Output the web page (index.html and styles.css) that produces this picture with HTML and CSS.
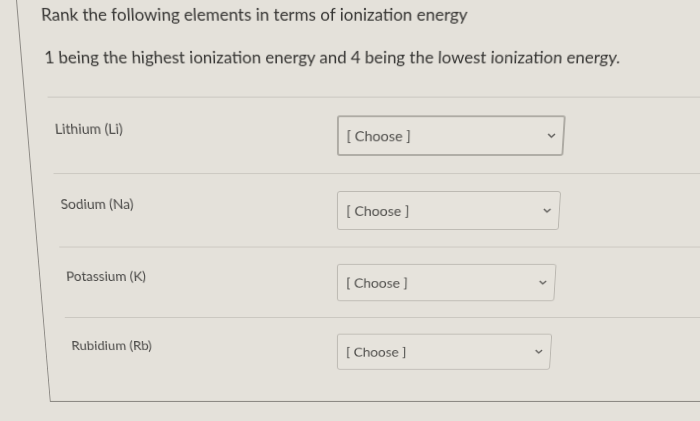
FILE: index.html
```html
<!DOCTYPE html>
<html lang="en">
<head>
    <meta charset="UTF-8">
    <meta name="viewport" content="width=device-width, initial-scale=1.0">
    <title>Question</title>
    <link rel="stylesheet" href="styles.css">
</head>
<body>

    <div class="frame">
        <div class="page">
            <div class="quiz">
                <p class="title">Rank the following elements in terms of ionization energy</p>
                <p class="title second">1 being the highest ionization energy and 4 being the lowest ionization energy.</p>

                <div class="rows">
                    <div class="row">
                        <div class="label">Lithium (Li)</div>
                        <div class="pick first">
                            <select><option>[ Choose ]</option></select>
                            <svg class="arrow" width="9" height="6" viewBox="0 0 9 6"><path d="M1 1 L4.5 4.5 L8 1"/></svg>
                        </div>
                    </div>
                    <div class="row">
                        <div class="label">Sodium (Na)</div>
                        <div class="pick">
                            <select><option>[ Choose ]</option></select>
                            <svg class="arrow" width="9" height="6" viewBox="0 0 9 6"><path d="M1 1 L4.5 4.5 L8 1"/></svg>
                        </div>
                    </div>
                    <div class="row">
                        <div class="label">Potassium (K)</div>
                        <div class="pick">
                            <select><option>[ Choose ]</option></select>
                            <svg class="arrow" width="9" height="6" viewBox="0 0 9 6"><path d="M1 1 L4.5 4.5 L8 1"/></svg>
                        </div>
                    </div>
                    <div class="row">
                        <div class="label">Rubidium (Rb)</div>
                        <div class="pick">
                            <select><option>[ Choose ]</option></select>
                            <svg class="arrow" width="9" height="6" viewBox="0 0 9 6"><path d="M1 1 L4.5 4.5 L8 1"/></svg>
                        </div>
                    </div>
                </div>
            </div>
        </div>
    </div>

</body>
</html>
```

FILE: styles.css
```css
html,body{
    margin: 0;
    padding: 0;
    overflow: hidden;
}
body{
    background: #e4e1da;
    font-family: "Lato", "Open Sans", sans-serif;
}
.frame{
    width: 700px;
    height: 421px;
    overflow: hidden;
}
/* the photo was taken at an angle, so the whole sheet leans back a bit */
.page{
    width: 745px;
    transform-origin: 336px 0;
    transform: perspective(500px) rotateX(-7.5deg);
}
.quiz{
    margin-left: 16px;
    border-left: 1px solid #8d8a85;
    border-bottom: 1px solid #8d8a85;
    padding: 3px 0 20px 23px;
}
.title{
    margin: 0;
    font-size: 17px;
    line-height: 22px;
    padding-top: 1px;
    color: #363533;
}
.second{
    margin-top: 21px;
}
.rows{
    margin-top: 30px;
}
.row{
    display: flex;
    align-items: flex-start;
    border-top: 1px solid #c9c6bf;
    padding: 19px 0;
}
.label{
    width: 292px;
    padding: 6px 0 0 5px;
    font-size: 14.5px;
    line-height: 17px;
    color: #4a4947;
}
.pick{
    position: relative;
    width: 236px;
    height: 44px;
}
.pick select{
    -webkit-appearance: none;
    appearance: none;
    width: 100%;
    height: 44px;
    margin: 0;
    padding: 0 9px;
    border: 1px solid #b9b6af;
    border-radius: 3px;
    background: #e6e3dc;
    font-family: "Lato", "Open Sans", sans-serif;
    font-size: 15px;
    color: #52514e;
}
.pick.first select{
    border: 2px solid #aeaba4;
    padding: 0 8px;
}
.arrow{
    position: absolute;
    right: 9px;
    top: 19px;
}
.arrow path{
    fill: none;
    stroke: #5a5956;
    stroke-width: 1.5;
}
```
